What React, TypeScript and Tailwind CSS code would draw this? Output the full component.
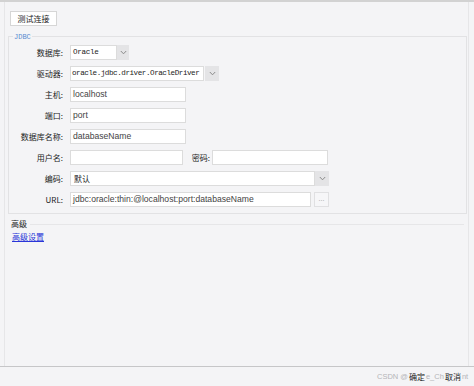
import React from "react";

const cjk = { fontFamily: '"Noto Sans CJK SC", "Liberation Sans", sans-serif' };
const sans = { fontFamily: '"Liberation Sans", "Noto Sans CJK SC", sans-serif' };
const mono = { fontFamily: '"Liberation Mono", "DejaVu Sans Mono", monospace' };

function Chevron() {
  return (
    <svg width="7" height="5" viewBox="0 0 7 5">
      <polyline points="0.8,1 3.5,3.8 6.2,1" fill="none" stroke="#8a8a8a" strokeWidth="1" />
    </svg>
  );
}

function Label({ children }: { children: React.ReactNode }) {
  return (
    <div className="w-[54px] shrink-0 text-right text-[8px] leading-[15px] text-[#222]" style={cjk}>
      {children}
    </div>
  );
}

function Input({ w, value }: { w: string; value?: string }) {
  return (
    <div
      className={`${w} h-[15px] bg-white border border-[#dcdcdc] pl-[2px] text-[8.6px] leading-[13px] text-[#444] overflow-hidden whitespace-nowrap`}
      style={sans}
    >
      {value}
    </div>
  );
}

export default function App() {
  return (
    <div className="w-[474px] h-[386px] bg-[#f4f4f6] flex flex-col overflow-hidden relative">
      <div className="h-[2px] bg-[#d2d2d2]" />
      <div className="h-[364px] border-l border-[#e6e6e8] ml-[4px] mr-[5px] border-r flex flex-col">
        <div className="pl-[5px] pt-[9px]">
          <div
            className="w-[47px] h-[15px] bg-white border border-[#d6d6d6] text-[8px] leading-[13px] text-center text-[#222]"
            style={cjk}
          >
            测试连接
          </div>
        </div>
        <div className="relative mt-[10px] ml-[3px] mr-[1px] border border-[#e2e2e4] pt-[8px] pb-[6px]">
          <div
            className="absolute left-[4px] top-[-4px] bg-[#f4f4f6] px-[1px] text-[7px] leading-[8px] text-[#5a8bd0]"
            style={mono}
          >
            JDBC
          </div>
          <div className="flex flex-col gap-[6px]">
            <div className="flex items-center">
              <Label>数据库:</Label>
              <div className="ml-[7px] flex h-[15px]">
                <div
                  className="w-[47px] bg-white border border-[#dcdcdc] pl-[2px] text-[7.6px] leading-[13px] text-[#222] tracking-[-0.3px]"
                  style={mono}
                >
                  Oracle
                </div>
                <div className="w-[12px] bg-[#e4e4e6] flex items-center justify-center">
                  <Chevron />
                </div>
              </div>
            </div>
            <div className="flex items-center">
              <Label>驱动器:</Label>
              <div className="ml-[7px] flex h-[15px]">
                <div
                  className="w-[134px] bg-white border border-[#dcdcdc] pl-[1px] text-[7.6px] leading-[13px] text-[#222] tracking-[-0.45px] whitespace-nowrap overflow-hidden"
                  style={mono}
                >
                  oracle.jdbc.driver.OracleDriver
                </div>
                <div className="w-[14px] ml-[1px] bg-[#e4e4e6] flex items-center justify-center">
                  <Chevron />
                </div>
              </div>
            </div>
            <div className="flex items-center">
              <Label>主机:</Label>
              <div className="ml-[7px]">
                <Input w="w-[116px]" value="localhost" />
              </div>
            </div>
            <div className="flex items-center">
              <Label>端口:</Label>
              <div className="ml-[7px]">
                <Input w="w-[116px]" value="port" />
              </div>
            </div>
            <div className="flex items-center">
              <Label>数据库名称:</Label>
              <div className="ml-[7px]">
                <Input w="w-[116px]" value="databaseName" />
              </div>
            </div>
            <div className="flex items-center">
              <Label>用户名:</Label>
              <div className="ml-[7px] flex items-center">
                <Input w="w-[113px]" />
                <div className="w-[29px] text-right pr-[2px] text-[8px] leading-[15px] text-[#222]" style={cjk}>
                  密码:
                </div>
                <Input w="w-[116px]" />
              </div>
            </div>
            <div className="flex items-center">
              <Label>编码:</Label>
              <div className="ml-[7px] flex h-[15px]">
                <div
                  className="w-[245px] bg-white border border-[#dcdcdc] pl-[3px] text-[8px] leading-[13px] text-[#222]"
                  style={cjk}
                >
                  默认
                </div>
                <div className="w-[14px] bg-[#e4e4e6] flex items-center justify-center">
                  <Chevron />
                </div>
              </div>
            </div>
            <div className="flex items-center">
              <Label>URL:</Label>
              <div className="ml-[7px] flex items-center h-[15px]">
                <Input w="w-[241px]" value="jdbc:oracle:thin:@localhost:port:databaseName" />
                <div
                  className="ml-[3px] w-[15px] h-[15px] bg-[#f6f6f8] border border-[#e0e0e2] text-[7px] leading-[11px] text-center text-[#999]"
                  style={sans}
                >
                  ...
                </div>
              </div>
            </div>
          </div>
        </div>
        <div className="flex items-center mt-[4px] pl-[6px] pr-[4px]">
          <div className="text-[8px] leading-[12px] text-[#222]" style={cjk}>
            高级
          </div>
          <div className="flex-1 h-px bg-[#e6e6e8] ml-[3px]" />
        </div>
        <div className="pl-[7px] mt-[1px] text-[8px] leading-[12px]" style={cjk}>
          <span className="text-[#2a35d8] underline">高级设置</span>
        </div>
      </div>
      <div className="h-px bg-[#c6c6c8]" />
      <div className="flex-1 flex items-center pl-[377px] text-[8px] leading-[12px] whitespace-nowrap" style={sans}>
        <span className="text-[#b4b4b8] text-[7.5px]">CSDN @</span>
        <span className="ml-[1px] text-[#222]" style={cjk}>确定</span>
        <span className="ml-[1px] text-[#b4b4b8] text-[7.5px]">e_Ch</span>
        <span className="ml-[1px] text-[#222]" style={cjk}>取消</span>
        <span className="ml-[1px] text-[#b4b4b8] text-[7.5px]">nt</span>
      </div>
    </div>
  );
}
